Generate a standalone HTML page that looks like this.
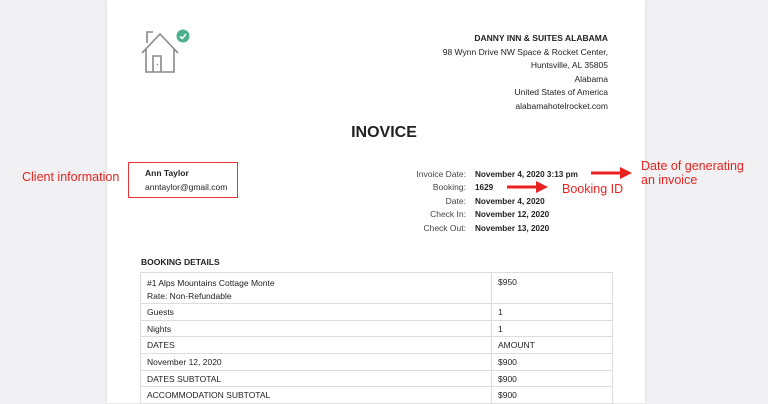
<!DOCTYPE html>
<html><head><meta charset="utf-8"><style>
*{margin:0;padding:0;box-sizing:border-box}
body{width:768px;height:403px;overflow:hidden;background:#f1f1f3;font-family:"Liberation Sans",sans-serif;position:relative;color:#222}
.page{position:absolute;left:107px;top:0;width:538px;height:403px;background:#fff;box-shadow:0 0 3px rgba(0,0,0,.12)}
.a{position:absolute;font-size:8.5px;white-space:nowrap}
.r{text-align:right}
.b{font-weight:bold}
.red{color:#e8231f;font-size:12.5px;position:absolute;white-space:nowrap;line-height:14px}
table{position:absolute;left:140px;top:272px;width:473px;border-collapse:collapse;font-size:8.5px}
td{border:1px solid #ddd;padding:0 6px;height:16.7px;vertical-align:middle}
td:first-child{width:351px}
</style></head><body>
<div class="page"></div>
<svg style="position:absolute;left:140px;top:28px" width="54" height="48" viewBox="0 0 54 48">
<path d="M7 15 V4 H13 M2 25 L20 6 L38 25 M6 21 V44 H34 V21 M13 44 V28 H21 V44" fill="none" stroke="#888" stroke-width="1.6"/>
<circle cx="17.5" cy="36.5" r="0.8" fill="#888"/>
<circle cx="43" cy="8" r="6.5" fill="#4bb08d"/>
<path d="M40 8.5 L42.3 10.5 L46 6" fill="none" stroke="#fff" stroke-width="1.6"/>
</svg>
<div class="a r b" style="right:160px;top:33px">DANNY INN &amp; SUITES ALABAMA</div>
<div class="a r" style="right:160px;top:46px;line-height:13.4px">98 Wynn Drive NW Space &amp; Rocket Center,<br>Huntsville, AL 35805<br>Alabama<br>United States of America<br>alabamahotelrocket.com</div>
<div class="a b" style="left:0;width:768px;text-align:center;top:124px;font-size:16px">INOVICE</div>
<div style="position:absolute;left:128px;top:162px;width:110px;height:36px;border:1.5px solid #e33"></div>
<div class="a b" style="left:145px;top:168px">Ann Taylor</div>
<div class="a" style="left:145px;top:182px">anntaylor@gmail.com</div>
<div class="a r" style="right:302px;top:168px;line-height:13.4px;color:#444">Invoice Date:<br>Booking:<br>Date:<br>Check In:<br>Check Out:</div>
<div class="a b" style="left:475px;top:168px;line-height:13.4px;font-size:8.2px">November 4, 2020 3:13 pm<br>1629<br>November 4, 2020<br>November 12, 2020<br>November 13, 2020</div>
<div class="red" style="left:22px;top:170px">Client information</div>
<div class="red" style="left:562px;top:182px">Booking ID</div>
<div class="red" style="left:641px;top:159px">Date of generating<br>an invoice</div>
<svg style="position:absolute;left:0;top:0" width="768" height="403">
<path d="M591 173 H622" stroke="#e8231f" stroke-width="3"/><path d="M620 167 L632 173 L620 179Z" fill="#e8231f"/>
<path d="M507 187 H538" stroke="#e8231f" stroke-width="3"/><path d="M536 181 L548 187 L536 193Z" fill="#e8231f"/>
</svg>
<div class="a b" style="left:141px;top:257px">BOOKING DETAILS</div>
<table>
<tr><td style="height:31px;vertical-align:top;padding-top:4px;line-height:13px">#1 Alps Mountains Cottage Monte<br>Rate: Non-Refundable</td><td style="vertical-align:top;padding-top:4px">$950</td></tr>
<tr><td>Guests</td><td>1</td></tr>
<tr><td>Nights</td><td>1</td></tr>
<tr><td>DATES</td><td>AMOUNT</td></tr>
<tr><td>November 12, 2020</td><td>$900</td></tr>
<tr><td>DATES SUBTOTAL</td><td>$900</td></tr>
<tr><td>ACCOMMODATION SUBTOTAL</td><td>$900</td></tr>
</table>
</body></html>
